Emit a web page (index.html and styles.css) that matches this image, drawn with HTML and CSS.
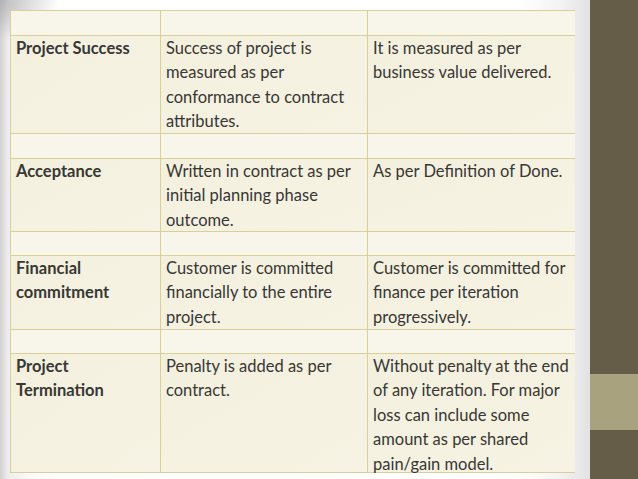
FILE: index.html
```html
<!DOCTYPE html>
<html>
<head>
<meta charset="utf-8">
<link rel="stylesheet" href="styles.css">
</head>
<body>
<div class="slide">
  <div class="main">
    <div class="grid">
      <div class="cell blank"></div><div class="cell blank"></div><div class="cell blank"></div>
      <div class="cell head">Project Success</div>
      <div class="cell">Success of project is measured as per conformance to contract attributes.</div>
      <div class="cell">It is measured as per business value delivered.</div>
      <div class="cell blank"></div><div class="cell blank"></div><div class="cell blank"></div>
      <div class="cell head">Acceptance</div>
      <div class="cell">Written in contract as per initial planning phase outcome.</div>
      <div class="cell">As per Definition of Done.</div>
      <div class="cell blank"></div><div class="cell blank"></div><div class="cell blank"></div>
      <div class="cell head">Financial commitment</div>
      <div class="cell">Customer is committed financially to the entire project.</div>
      <div class="cell">Customer is committed for finance per iteration progressively.</div>
      <div class="cell blank"></div><div class="cell blank"></div><div class="cell blank"></div>
      <div class="cell head">Project Termination</div>
      <div class="cell">Penalty is added as per contract.</div>
      <div class="cell">Without penalty at the end of any iteration. For major loss can include some amount as per shared pain/gain model.</div>
    </div>
  </div>
  <div class="side">
    <div class="side-top"></div>
    <div class="side-band"></div>
    <div class="side-bottom"></div>
  </div>
</div>
</body>
</html>
```

FILE: styles.css
```css
html, body {
  margin: 0;
  padding: 0;
}
body {
  width: 638px;
  height: 479px;
  overflow: hidden;
  font-family: Lato, "Open Sans", sans-serif;
}
.slide {
  display: flex;
  width: 638px;
  height: 479px;
}
.main {
  width: 590px;
  height: 479px;
  box-sizing: border-box;
  padding: 10px 15px 0 10px;
  background:
    radial-gradient(ellipse 60px 40px at 0 0, rgba(150,150,150,0.55), rgba(150,150,150,0) 100%),
    linear-gradient(to right, #d2d2d2 0, #ededed 8px, #fbfbfb 30px, #ffffff 60px, #ffffff 520px, #f3f3f3 560px, #e2e2e2 590px);
}
.grid {
  display: grid;
  grid-template-columns: 149px 206px 207px;
  grid-template-rows: 24px 97px 24px 72px 23px 73px 23px 118px;
  gap: 1px;
  background: #d9cf97;
  border: 1px solid #d9cf97;
  width: 565px;
  box-sizing: border-box;
}
.cell {
  background: linear-gradient(to bottom right, #f3f0de, #f6f3e4);
  color: #383734;
  font-size: 16.5px;
  line-height: 24.4px;
  padding: 0 4px 0 5px;
  overflow: visible;
}
.cell.blank {
  background: rgba(255,255,255,0.8);
}
.cell.head {
  font-weight: bold;
}
.side {
  width: 48px;
  height: 479px;
  display: flex;
  flex-direction: column;
}
.side-top {
  height: 374px;
  background: #655d48;
}
.side-band {
  height: 56px;
  background: #a8a27f;
}
.side-bottom {
  flex: 1;
  background: #655d48;
}
```
